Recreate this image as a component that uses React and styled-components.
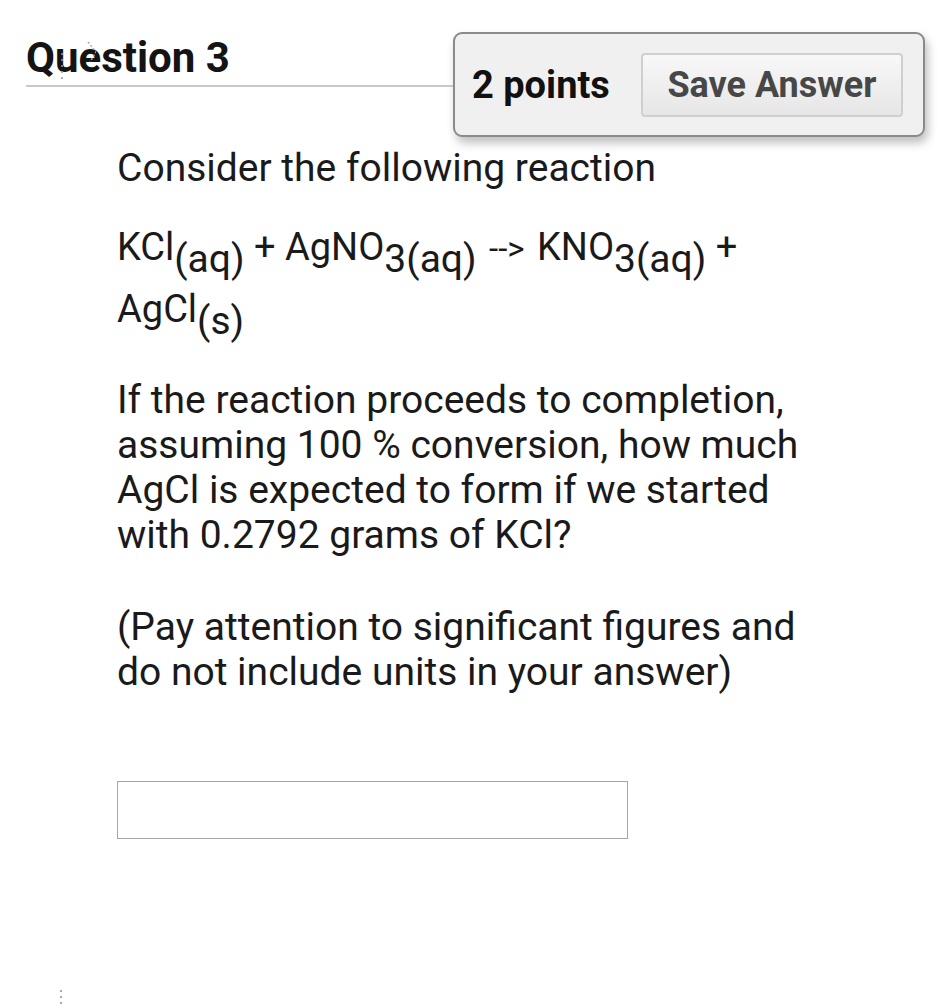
import styled, { createGlobalStyle } from 'styled-components';

const GlobalStyle = createGlobalStyle`
    html, body {
        margin: 0;
        padding: 0;
        background: #ffffff;
    }
    body {
        font-family: Roboto, "Liberation Sans", sans-serif;
        color: #1a1a1a;
    }
`;

const Page = styled.div`
    width: 949px;
    height: 1008px;
    position: relative;
    overflow: hidden;
    background: #fff;
`;

const Header = styled.div`
    display: flex;
    align-items: flex-start;
    padding: 32px 24px 0 26px;
`;

const TitleBar = styled.div`
    flex: 1;
    height: 53px;
    border-bottom: 2px solid #c8c8c8;
    position: relative;
`;

const Title = styled.h1`
    margin: 0;
    padding-top: 2px;
    font-size: 42px;
    font-weight: 700;
    line-height: 48px;
    color: #141414;
`;

const Handle = styled.svg`
    position: absolute;
    left: 30px;
    top: 8px;
`;

const PointsBox = styled.div`
    display: flex;
    align-items: center;
    gap: 31px;
    width: 472px;
    height: 105px;
    box-sizing: border-box;
    padding: 0 20px 0 17px;
    background: #f0f0f0;
    border: 2px solid #8a8a8a;
    border-radius: 9px;
    box-shadow: 3px 6px 10px rgba(0, 0, 0, 0.25);
`;

const Points = styled.span`
    font-size: 38px;
    font-weight: 700;
    color: #111;
`;

const SaveButton = styled.button`
    flex: 1;
    height: 64px;
    border: 2px solid #cfcfcf;
    border-radius: 4px;
    background: linear-gradient(#f8f8f8, #e6e6e6);
    font-family: Roboto, "Liberation Sans", sans-serif;
    font-size: 36px;
    font-weight: 700;
    color: #474747;
    padding: 0;
`;

const Body = styled.div`
    padding: 9px 0 0 117px;
    width: 780px;
`;

const Para = styled.p`
    margin: 0 0 ${({ $gap }) => $gap}px;
    font-size: 39px;
    line-height: 45px;
    color: #1a1a1a;
`;

const Equation = styled.div`
    font-size: 38px;
    line-height: 60px;
    margin: -14px 0 39px;
    color: #1a1a1a;
    white-space: nowrap;
`;

const Sub = styled.span`
    font-size: 39px;
    position: relative;
    top: 12px;
`;

const Arrow = styled.span`
    font-size: 33px;
    margin: 0 3px;
`;

const Answer = styled.input`
    display: block;
    margin-top: 86px;
    width: 511px;
    height: 58px;
    box-sizing: border-box;
    border: 1px solid #a6a6a6;
    background: #fff;
`;

const Dots = styled.svg`
    position: absolute;
    left: 58px;
    top: 988px;
`;

export default function App() {
    return (
        <Page>
            <GlobalStyle />
            <Header>
                <TitleBar>
                    <Title>Question 3</Title>
                    <Handle width="40" height="42" viewBox="0 0 40 42">
                        <g fill="#999">
                            <circle cx="6" cy="14" r="1" />
                            <circle cx="6" cy="20" r="1" />
                            <circle cx="6" cy="26" r="1" />
                            <circle cx="6" cy="32" r="1" />
                            <circle cx="6" cy="38" r="1" />
                        </g>
                        <path d="M32 2 L40 12 L34 22" stroke="#aaa" strokeWidth="1.5" fill="none" strokeDasharray="2 2" />
                    </Handle>
                </TitleBar>
                <PointsBox>
                    <Points>2 points</Points>
                    <SaveButton type="button">Save Answer</SaveButton>
                </PointsBox>
            </Header>
            <Body>
                <Para $gap={40}>Consider the following reaction</Para>
                <Equation>
                    <div>
                        KCl<Sub>(aq)</Sub> + AgNO<Sub>3(aq)</Sub> <Arrow>--&gt;</Arrow> KNO<Sub>3(aq)</Sub> +
                    </div>
                    <div>
                        AgCl<Sub>(s)</Sub>
                    </div>
                </Equation>
                <Para $gap={47}>
                    If the reaction proceeds to completion,<br />
                    assuming 100 % conversion, how much<br />
                    AgCl is expected to form if we started<br />
                    with 0.2792 grams of KCl?
                </Para>
                <Para $gap={0}>
                    (Pay attention to significant figures and<br />
                    do not include units in your answer)
                </Para>
                <Answer type="text" />
            </Body>
            <Dots width="6" height="18" viewBox="0 0 6 18">
                <g fill="#aaa">
                    <rect x="2" y="2" width="2" height="2" />
                    <rect x="2" y="8" width="2" height="2" />
                    <rect x="2" y="14" width="2" height="2" />
                </g>
            </Dots>
        </Page>
    );
}
